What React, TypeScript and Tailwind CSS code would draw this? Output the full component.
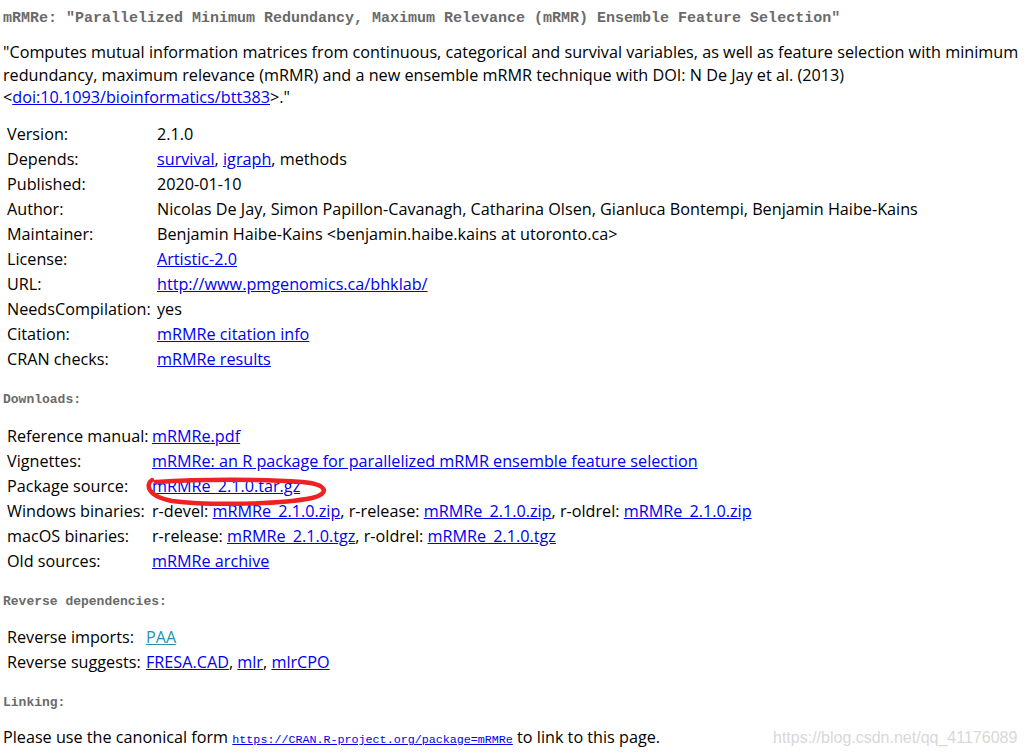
import React from "react";

const sans = "font-['Microsoft_YaHei','Open_Sans','Noto_Sans',sans-serif]";
const mono = "font-['Liberation_Mono','Courier_New',monospace]";

type Part = string | { href: string; text: string; visited?: boolean };

function Value({ parts }: { parts: Part[] }) {
  return (
    <>
      {parts.map((p, i) =>
        typeof p === "string" ? (
          <span key={i}>{p}</span>
        ) : (
          <a
            key={i}
            href="#"
            className={`underline ${p.visited ? "text-[#2b8fb0]" : "text-[#0000ee]"}`}
          >
            {p.text}
          </a>
        )
      )}
    </>
  );
}

function Rows({ rows, labelW }: { rows: [string, Part[]][]; labelW: string }) {
  return (
    <div className="pl-[7px]">
      {rows.map(([label, parts]) => (
        <div key={label} className="flex h-[25px] items-center whitespace-nowrap">
          <div className={`${labelW} shrink-0`}>{label}</div>
          <div>
            <Value parts={parts} />
          </div>
        </div>
      ))}
    </div>
  );
}

function Heading({ children }: { children: React.ReactNode }) {
  return (
    <h4 className={`${mono} text-[13px] font-bold text-[#6a6a6a] pl-[3px] leading-[20px]`}>
      {children}
    </h4>
  );
}

export default function App() {
  const info: [string, Part[]][] = [
    ["Version:", ["2.1.0"]],
    ["Depends:", [{ href: "#", text: "survival" }, ", ", { href: "#", text: "igraph" }, ", methods"]],
    ["Published:", ["2020-01-10"]],
    [
      "Author:",
      ["Nicolas De Jay, Simon Papillon-Cavanagh, Catharina Olsen, Gianluca Bontempi, Benjamin Haibe-Kains"],
    ],
    ["Maintainer:", ["Benjamin Haibe-Kains <benjamin.haibe.kains at utoronto.ca>"]],
    ["License:", [{ href: "#", text: "Artistic-2.0" }]],
    ["URL:", [{ href: "#", text: "http://www.pmgenomics.ca/bhklab/" }]],
    ["NeedsCompilation:", ["yes"]],
    ["Citation:", [{ href: "#", text: "mRMRe citation info" }]],
    ["CRAN checks:", [{ href: "#", text: "mRMRe results" }]],
  ];

  const downloads: [string, Part[]][] = [
    ["Reference manual:", [{ href: "#", text: "mRMRe.pdf" }]],
    ["Vignettes:", [{ href: "#", text: "mRMRe: an R package for parallelized mRMR ensemble feature selection" }]],
    ["Package source:", [{ href: "#", text: "mRMRe_2.1.0.tar.gz" }]],
    [
      "Windows binaries:",
      [
        "r-devel: ",
        { href: "#", text: "mRMRe_2.1.0.zip" },
        ", r-release: ",
        { href: "#", text: "mRMRe_2.1.0.zip" },
        ", r-oldrel: ",
        { href: "#", text: "mRMRe_2.1.0.zip" },
      ],
    ],
    [
      "macOS binaries:",
      ["r-release: ", { href: "#", text: "mRMRe_2.1.0.tgz" }, ", r-oldrel: ", { href: "#", text: "mRMRe_2.1.0.tgz" }],
    ],
    ["Old sources:", [{ href: "#", text: "mRMRe archive" }]],
  ];

  const reverse: [string, Part[]][] = [
    ["Reverse imports:", [{ href: "#", text: "PAA", visited: true }]],
    [
      "Reverse suggests:",
      [{ href: "#", text: "FRESA.CAD" }, ", ", { href: "#", text: "mlr" }, ", ", { href: "#", text: "mlrCPO" }],
    ],
  ];

  return (
    <div className={`${sans} relative min-h-[755px] bg-white text-[16.2px] text-black overflow-hidden`}>
      <h2 className={`${mono} text-[15px] font-bold text-[#6a6a6a] pl-[3px] pt-[9px] leading-[20px] whitespace-nowrap`}>
        mRMRe: ″Parallelized Minimum Redundancy, Maximum Relevance (mRMR) Ensemble Feature Selection″
      </h2>

      <p className="pl-[3px] mt-[12px] leading-[22.5px] whitespace-nowrap">
        "Computes mutual information matrices from continuous, categorical and survival variables, as well as
        feature selection with minimum
        <br />
        redundancy, maximum relevance (mRMR) and a new ensemble mRMR technique with DOI: N De Jay et al. (2013)
        <br />
        &lt;
        <a href="#" className="underline text-[#0000ee]">
          doi:10.1093/bioinformatics/btt383
        </a>
        &gt;."
      </p>

      <div className="mt-[13.5px]">
        <Rows rows={info} labelW="w-[150px]" />
      </div>

      <div className="mt-[18px]">
        <Heading>Downloads:</Heading>
      </div>
      <div className="mt-[14px] relative">
        <Rows rows={downloads} labelW="w-[145px]" />
        <svg
          className="absolute left-[142px] top-[50px] pointer-events-none"
          width="192"
          height="34"
          viewBox="0 0 192 34"
        >
          <path
            d="M10 6 C 4 10, 4 22, 30 27 C 70 32, 140 30, 170 24 C 188 20, 186 10, 160 8 C 120 5, 60 5, 14 8"
            fill="none"
            stroke="#ee2222"
            strokeWidth="4.5"
            strokeLinecap="round"
          />
        </svg>
      </div>

      <div className="mt-[18px]">
        <Heading>Reverse dependencies:</Heading>
      </div>
      <div className="mt-[13px]">
        <Rows rows={reverse} labelW="w-[139px]" />
      </div>

      <div className="mt-[18px]">
        <Heading>Linking:</Heading>
      </div>
      <p className="pl-[3px] mt-[13px] leading-[22px] whitespace-nowrap">
        Please use the canonical form{" "}
        <a href="#" className={`${mono} underline text-[#0000ee] text-[11.7px]`}>
          https://CRAN.R-project.org/package=mRMRe
        </a>{" "}
        to link to this page.
      </p>

      <div className="absolute left-[773px] top-[726px] text-[16px] text-[#d8d8d8] whitespace-nowrap font-['Liberation_Sans',sans-serif]">
        https://blog.csdn.net/qq_41176089
      </div>
    </div>
  );
}
